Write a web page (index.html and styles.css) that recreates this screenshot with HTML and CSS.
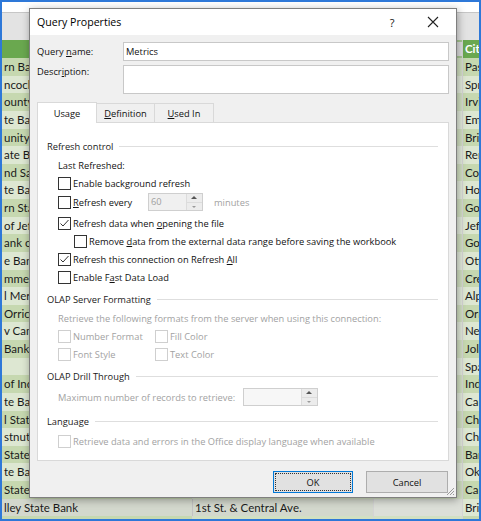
FILE: index.html
```html
<!DOCTYPE html>
<html>
<head>
<meta charset="utf-8">
<link rel="stylesheet" href="styles.css">
</head>
<body>
<div class="screen">
  <div class="sheet">
    <div class="formula"></div>
    <div class="colheads"></div>
    <div class="row hdr"><div class="c a"></div><div class="c b"></div><div class="c cc"><span class="filter"></span></div><div class="c d">City</div></div>
    <div class="row r0"><div class="c a">rn Bank</div><div class="c b"></div><div class="c cc"></div><div class="c d">Pasadena</div></div>
    <div class="row r1"><div class="c a">ncock</div><div class="c b"></div><div class="c cc"></div><div class="c d">Springfield</div></div>
    <div class="row r0"><div class="c a">ounty</div><div class="c b"></div><div class="c cc"></div><div class="c d">Irvine</div></div>
    <div class="row r1"><div class="c a">te Bank</div><div class="c b"></div><div class="c cc"></div><div class="c d">Emporia</div></div>
    <div class="row r0"><div class="c a">unity B</div><div class="c b"></div><div class="c cc"></div><div class="c d">Bristol</div></div>
    <div class="row r1"><div class="c a">ate Bank</div><div class="c b"></div><div class="c cc"></div><div class="c d">Reno</div></div>
    <div class="row r0"><div class="c a">nd Sav</div><div class="c b"></div><div class="c cc"></div><div class="c d">Columbus</div></div>
    <div class="row r1"><div class="c a">te Bank</div><div class="c b"></div><div class="c cc"></div><div class="c d">Houston</div></div>
    <div class="row r0"><div class="c a">rn Sta</div><div class="c b"></div><div class="c cc"></div><div class="c d">Gowen</div></div>
    <div class="row r1"><div class="c a">of Jeff</div><div class="c b"></div><div class="c cc"></div><div class="c d">Jefferson</div></div>
    <div class="row r0"><div class="c a">ank o</div><div class="c b"></div><div class="c cc"></div><div class="c d">Gordon</div></div>
    <div class="row r1"><div class="c a">e Bank</div><div class="c b"></div><div class="c cc"></div><div class="c d">Ottawa</div></div>
    <div class="row r0"><div class="c a">mmerc</div><div class="c b"></div><div class="c cc"></div><div class="c d">Crete</div></div>
    <div class="row r1"><div class="c a">l Merc</div><div class="c b"></div><div class="c cc"></div><div class="c d">Alpha</div></div>
    <div class="row r0"><div class="c a">Orric</div><div class="c b"></div><div class="c cc"></div><div class="c d">Orrick</div></div>
    <div class="row r1"><div class="c a">v Cam</div><div class="c b"></div><div class="c cc"></div><div class="c d">New</div></div>
    <div class="row r0"><div class="c a">Bank a</div><div class="c b"></div><div class="c cc"></div><div class="c d">Joliet</div></div>
    <div class="row r1"><div class="c a"></div><div class="c b"></div><div class="c cc"></div><div class="c d">Sparta</div></div>
    <div class="row r0"><div class="c a">of Ind</div><div class="c b"></div><div class="c cc"></div><div class="c d">Indiana</div></div>
    <div class="row r1"><div class="c a">te Bank</div><div class="c b"></div><div class="c cc"></div><div class="c d">Carlyle</div></div>
    <div class="row r0"><div class="c a">l State</div><div class="c b"></div><div class="c cc"></div><div class="c d">Chicago</div></div>
    <div class="row r1"><div class="c a">stnut</div><div class="c b"></div><div class="c cc"></div><div class="c d">Chestnut</div></div>
    <div class="row r0"><div class="c a">State</div><div class="c b"></div><div class="c cc"></div><div class="c d">Barry</div></div>
    <div class="row r1"><div class="c a">te Bank</div><div class="c b"></div><div class="c cc"></div><div class="c d">Okawville</div></div>
    <div class="row r0"><div class="c a">State</div><div class="c b"></div><div class="c cc"></div><div class="c d">Carmi</div></div>
    <div class="row r1 shade"><div class="c a">lley State Bank</div><div class="c b">1st St. &amp; Central Ave.</div><div class="c cc"></div><div class="c d">Bristol</div></div>
    <div class="row r0"><div class="c a"></div><div class="c b"></div><div class="c cc"></div><div class="c d"></div></div>
  </div>

  <div class="dialog">
    <div class="titlebar">
      <span class="title">Query Properties</span>
      <span class="help">?</span>
      <span class="close"><svg width="12" height="12" viewBox="0 0 12 12"><path d="M1 1 L11 11 M11 1 L1 11" stroke="#222" stroke-width="1.1" fill="none"/></svg></span>
    </div>
    <div class="body">
      <div class="field">
        <span class="lbl">Query <u>n</u>ame:</span>
        <div class="input">Metrics</div>
      </div>
      <div class="field desc">
        <span class="lbl">Descr<u>i</u>ption:</span>
        <div class="textarea"></div>
      </div>
      <div class="tabs">
        <div class="tab active">Usa<u>g</u>e</div>
        <div class="tab"><u>D</u>efinition</div>
        <div class="tab"><u>U</u>sed In</div>
      </div>
      <div class="panel">
        <div class="group"><span>Refresh control</span></div>
        <div class="line m1"><span>Last Refreshed:</span></div>
        <div class="line"><span class="cb"></span><span>Enable background refresh</span></div>
        <div class="line m1"><span class="cb"></span><span class="every"><u>R</u>efresh every</span>
          <span class="spin s60"><span class="val">60</span><span class="arrows"><span class="up"></span><span class="dn"></span></span></span>
          <span class="mins">minutes</span></div>
        <div class="line m3"><span class="cb on"><svg width="11" height="11" viewBox="0 0 11 11"><path d="M1.5 5.5 L4 8 L9.5 2" stroke="#333" stroke-width="1" fill="none"/></svg></span><span>Refresh data when <u>o</u>pening the file</span></div>
        <div class="line sub"><span class="cb"></span><span>Remove <u>d</u>ata from the external data range before saving the workbook</span></div>
        <div class="line"><span class="cb on"><svg width="11" height="11" viewBox="0 0 11 11"><path d="M1.5 5.5 L4 8 L9.5 2" stroke="#333" stroke-width="1" fill="none"/></svg></span><span>Refresh this connection on Refresh <u>A</u>ll</span></div>
        <div class="line"><span class="cb"></span><span>Enable F<u>a</u>st Data Load</span></div>

        <div class="group m4"><span>OLAP Server Formatting</span></div>
        <div class="line m2 dis short"><span>Retrieve the following formats from the server when using this connection:</span></div>
        <div class="line dis"><span class="cell1"><span class="cb d"></span><span>Number Format</span></span><span class="cb d"></span><span>Fill Color</span></div>
        <div class="line dis"><span class="cell1"><span class="cb d"></span><span>Font Style</span></span><span class="cb d"></span><span>Text Color</span></div>

        <div class="group m4"><span>OLAP Drill Through</span></div>
        <div class="line m3 dis"><span>Maximum number of records to retrieve:</span>
          <span class="spin smax"><span class="val"></span><span class="arrows"><span class="up"></span><span class="dn"></span></span></span></div>

        <div class="group m6"><span>Language</span></div>
        <div class="line m2 dis"><span class="cb d"></span><span>Retrieve data and errors in the Office display language when available</span></div>
      </div>
      <div class="buttons">
        <div class="btn ok"><span>OK</span></div>
        <div class="btn">Cancel</div>
      </div>
    </div>
    <div class="grip"><svg width="10" height="10" viewBox="0 0 10 10"><path d="M9 2 L2 9 M9 5 L5 9 M9 8 L8 9" stroke="#9a9a9a" stroke-width="1"/></svg></div>
  </div>
</div>
</body>
</html>
```

FILE: styles.css
```css
html, body { margin: 0; padding: 0; }
body { width: 481px; height: 521px; overflow: hidden; background: #fff; }

.screen {
  position: relative;
  width: 481px;
  height: 521px;
  box-sizing: border-box;
  border: 2px solid #2e78d8;
  overflow: hidden;
  background: #fff;
}

/* ---------- spreadsheet behind ---------- */
.sheet { display: flex; flex-direction: column; font-family: Lato, "Liberation Sans", sans-serif; font-size: 11.5px; color: #1a1a1a; }
.formula { height: 10px; background: #fff; border-bottom: 1px solid #c6c6c6; }
.colheads { height: 27px; background: #e3e3e3; }
.row { display: grid; grid-template-columns: 190px 181px 89px 1fr; height: 17.64px; flex: none; }
.row.hdr { height: 18px; }
.c { overflow: hidden; white-space: nowrap; line-height: 17.64px; padding-left: 2px; box-sizing: border-box; }
.c.b, .c.cc { border-left: 1px solid #d4d4d4; }
.c.d { border-left: 1px solid #d4d4d4; padding-left: 2px; }
.r0 .c { background: #d2e0c2; }
.r1 .c { background: #e2eadb; }
.r0 .c.a, .r0 .c.d { background: #c6d8b0; }
.r1 .c.a, .r1 .c.d { background: #dde7d2; }
.row.shade .c.a, .row.shade .c.b { background: #d3d8cd; border-color: #c2c2c2; }
.row.shade .c.cc { background: #dcdfd8; }
.hdr .c { background: #6aa84f; color: #fff; font-weight: bold; line-height: 18px; }
.hdr .c.cc { position: relative; background: #a9c894; }
.filter { position: absolute; right: 0; top: 2px; width: 7px; height: 14px; background: #dedede; }

/* ---------- dialog ---------- */
.dialog {
  position: absolute;
  left: 27px;
  top: 6px;
  width: 428px;
  height: 490px;
  box-sizing: border-box;
  border: 1px solid #7f7f7f;
  background: #f0f0f0;
  box-shadow: 1px 2px 8px rgba(0,0,0,0.35);
  display: flex;
  flex-direction: column;
  font-family: "Open Sans", "Noto Sans", sans-serif;
  font-size: 9.3px;
  color: #111;
}
.titlebar { height: 26px; flex: none; background: #fff; display: flex; align-items: center; padding-left: 7px; }
.title { font-size: 10.6px; flex: 1; color: #000; }
.help { width: 12px; text-align: center; font-size: 11px; margin-right: 29px; }
.close { width: 12px; height: 12px; margin-right: 17px; display: flex; }

.body { flex: 1; display: flex; flex-direction: column; padding: 7px 7px 0 7px; }
.field { display: flex; align-items: flex-start; }
.lbl { width: 86px; flex: none; line-height: 19px; }
.input, .textarea { flex: 1; background: #fff; border: 1px solid #c8c8c8; box-sizing: border-box; }
.input { height: 19px; line-height: 17px; padding-left: 2px; }
.field.desc { margin-top: 4px; }
.textarea { height: 29px; }
.field.desc .lbl { line-height: 14px; }

.tabs { display: flex; margin-top: 8px; height: 20px; position: relative; z-index: 1; align-items: flex-end; }
.tab { height: 19px; line-height: 19px; box-sizing: border-box; border: 1px solid #d9d9d9; border-bottom: none; text-align: center; background: #f0f0f0; }
.tab:nth-child(1) { width: 60px; }
.tab:nth-child(2) { width: 58px; border-left: none; }
.tab:nth-child(3) { width: 59px; border-left: none; }
.tab.active { background: #fff; height: 21px; margin-bottom: -1px; line-height: 21px; }

.panel { background: #fff; border: 1px solid #d9d9d9; height: 339px; box-sizing: border-box; padding: 14px 10px 0 9px; }
.group { display: flex; align-items: center; height: 18px; color: #1a1a1a; }
.group::after { content: ""; flex: 1; height: 1px; background: #dedede; margin-left: 6px; }
.line { display: flex; align-items: center; height: 18px; padding-left: 11px; white-space: nowrap; }
.line.sub { padding-left: 27px; }
.m1 { margin-top: 1px; }
.m2 { margin-top: 2px; }
.m3 { margin-top: 3px; }
.m4 { margin-top: 4px; }
.m6 { margin-top: 6px; }
.short { height: 17px; }
.dis { color: #a2a2a2; }

.cb { width: 13px; height: 13px; box-sizing: border-box; border: 1px solid #333; background: #fff; margin-right: 2px; flex: none; display: flex; align-items: center; justify-content: center; }
.cb.d { border-color: #cfcfcf; }
.cell1 { display: flex; align-items: center; width: 97px; }

.every { width: 75px; }
.spin { display: flex; height: 18px; box-sizing: border-box; border: 1px solid #cfcfcf; background: #f0f0f0; }
.s60 { width: 55px; }
.smax { width: 75px; margin-left: 8px; background: #f7f7f7; }
.spin .val { flex: 1; color: #a0a0a0; padding-left: 2px; line-height: 16px; }
.arrows { width: 15px; display: flex; flex-direction: column; border-left: 1px solid #dcdcdc; }
.arrows .up, .arrows .dn { flex: 1; position: relative; background: #ececec; }
.arrows .up { border-bottom: 1px solid #dcdcdc; }
.arrows .up::after { content: ""; position: absolute; left: 4px; top: 2px; border-left: 3px solid transparent; border-right: 3px solid transparent; border-bottom: 3px solid #555; }
.arrows .dn::after { content: ""; position: absolute; left: 5px; top: 3px; border-left: 2px solid transparent; border-right: 2px solid transparent; border-top: 2px solid #999; }
.mins { color: #a2a2a2; margin-left: 11px; }

.buttons { display: flex; justify-content: flex-end; margin-top: 10px; padding-right: 1px; }
.btn { width: 82px; height: 22px; box-sizing: border-box; border: 1px solid #adadad; background: #e1e1e1; display: flex; align-items: center; justify-content: center; color: #111; }
.btn.ok { width: 80px; border: 1px solid #0078d7; margin-right: 13px; padding: 1px; }
.btn.ok span { flex: 1; align-self: stretch; display: flex; align-items: center; justify-content: center; border: 1px dotted #333; outline: 1px solid #0078d7; outline-offset: 1px; }

.grip { position: absolute; right: 1px; bottom: 1px; width: 10px; height: 10px; }
```
